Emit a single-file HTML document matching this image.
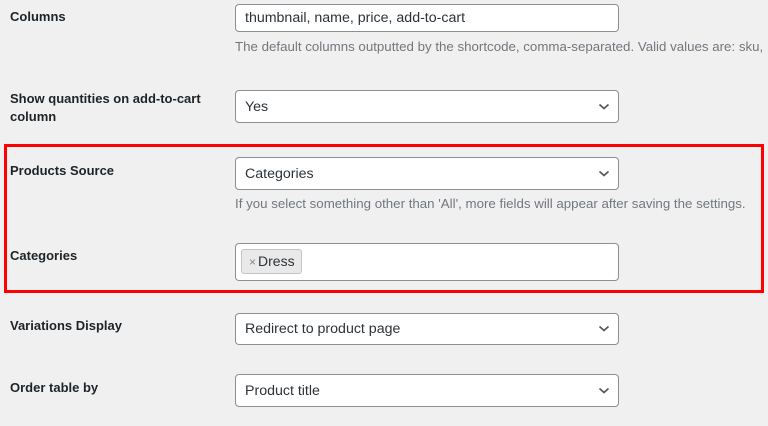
<!DOCTYPE html>
<html><head><meta charset="utf-8"><style>
html,body{margin:0;padding:0;width:768px;height:426px;overflow:hidden;background:#f0f0f1;font-family:"Liberation Sans",sans-serif;font-size:13px;color:#2c3338}
.lbl{position:absolute;left:10px;font-weight:bold;color:#1d2327;font-size:13px;line-height:18px}
.box{position:absolute;left:235px;width:384px;background:#fff;border:1px solid #8c8f94;border-radius:4px;box-sizing:border-box}
.box span{position:absolute;left:9px;top:50%;transform:translateY(-50%);font-size:14.2px;color:#2c3338;white-space:nowrap}
.box svg{position:absolute;right:8px;top:50%;margin-top:-4px}
.desc{position:absolute;left:235px;color:#72777c;font-size:13.3px;white-space:nowrap}
.red{position:absolute;left:4px;top:144px;width:760px;height:149px;border:3px solid #ff0000;box-sizing:border-box}
.tag{position:absolute;left:5px;top:5px;height:25px;padding:0 6px 0 7px;background:#e9e9e9;border:1px solid #c3c4c7;border-radius:3px;box-sizing:border-box;line-height:23px;font-size:14px;color:#2c3338}
.tag b{font-weight:normal;color:#888;font-size:12px;margin-right:2px}
</style></head><body>
<div class="lbl" style="top:8px">Columns</div>
<div class="box" style="top:4px;height:28px"><span>thumbnail, name, price, add-to-cart</span></div>
<div class="desc" style="top:39px">The default columns outputted by the shortcode, comma-separated. Valid values are: sku,</div>

<div class="lbl" style="top:90px">Show quantities on add-to-cart<br>column</div>
<div class="box" style="top:90px;height:33px"><span>Yes</span><svg width="12" height="8" viewBox="0 0 12 8"><path d="M1.5 1.5l4.5 4 4.5-4" fill="none" stroke="#50575e" stroke-width="1.7"/></svg></div>

<div class="red"></div>
<div class="lbl" style="top:162px">Products Source</div>
<div class="box" style="top:157px;height:33px"><span>Categories</span><svg width="12" height="8" viewBox="0 0 12 8"><path d="M1.5 1.5l4.5 4 4.5-4" fill="none" stroke="#50575e" stroke-width="1.7"/></svg></div>
<div class="desc" style="top:196px">If you select something other than 'All', more fields will appear after saving the settings.</div>

<div class="lbl" style="top:247px">Categories</div>
<div class="box" style="top:243px;height:38px"><div class="tag"><b>×</b>Dress</div></div>

<div class="lbl" style="top:317px">Variations Display</div>
<div class="box" style="top:313px;height:32px"><span>Redirect to product page</span><svg width="12" height="8" viewBox="0 0 12 8"><path d="M1.5 1.5l4.5 4 4.5-4" fill="none" stroke="#50575e" stroke-width="1.7"/></svg></div>

<div class="lbl" style="top:379px">Order table by</div>
<div class="box" style="top:374px;height:33px"><span>Product title</span><svg width="12" height="8" viewBox="0 0 12 8"><path d="M1.5 1.5l4.5 4 4.5-4" fill="none" stroke="#50575e" stroke-width="1.7"/></svg></div>
</body></html>
